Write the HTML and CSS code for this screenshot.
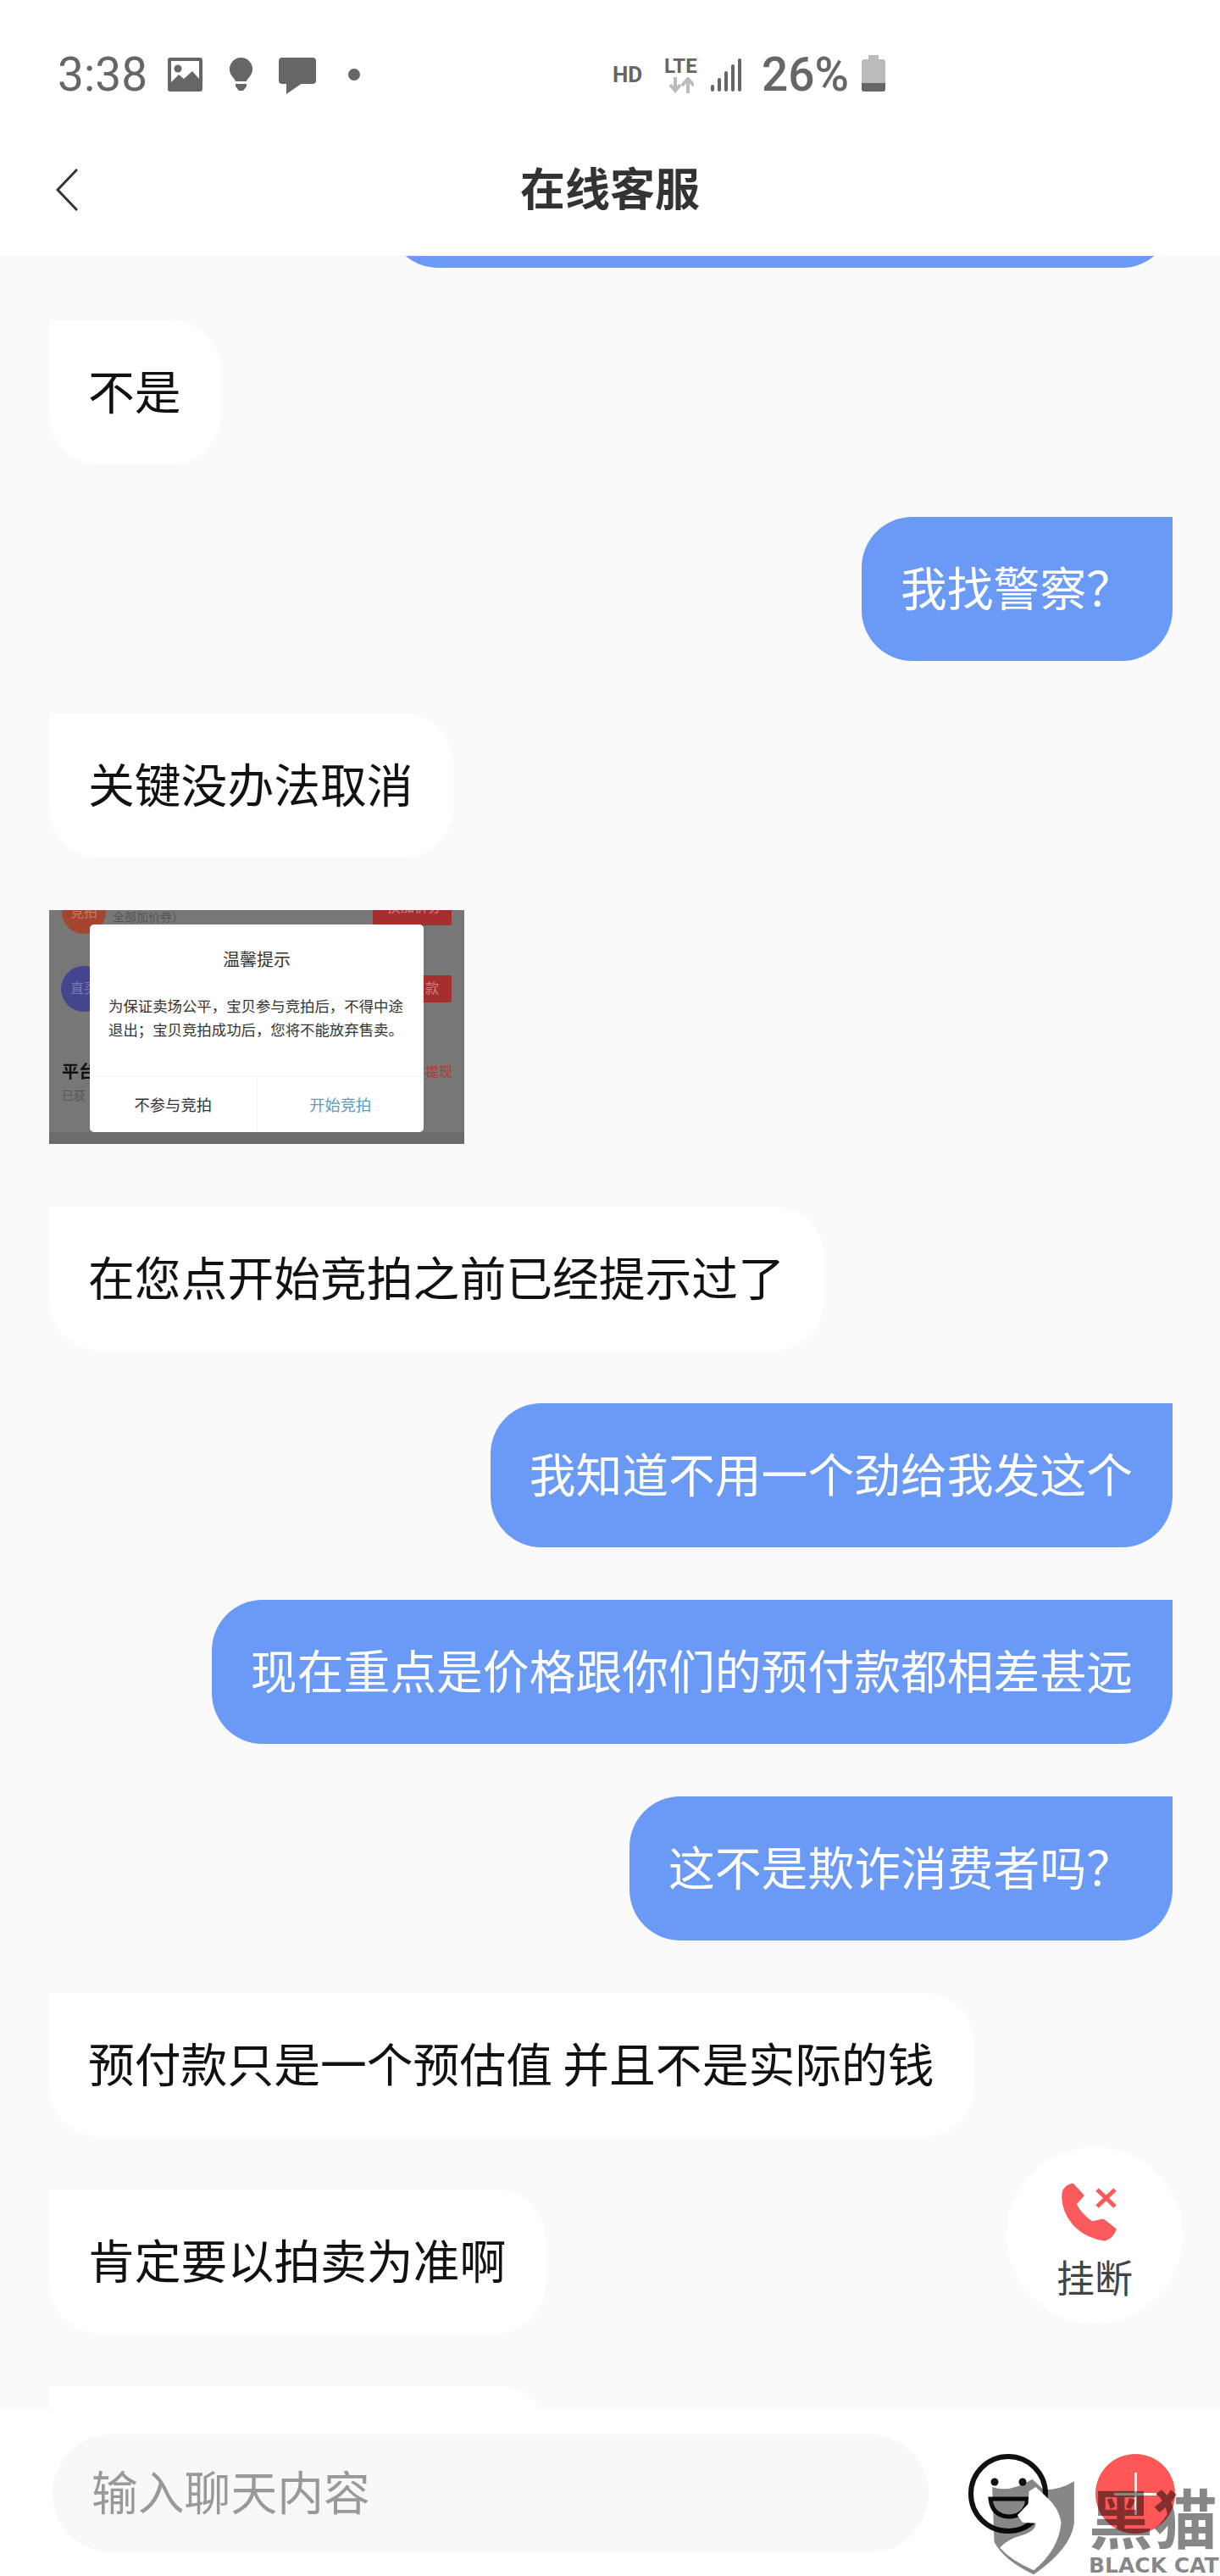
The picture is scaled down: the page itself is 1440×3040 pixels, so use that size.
FILE: index.html
```html
<!DOCTYPE html>
<html lang="zh-CN">
<head>
    <meta charset="UTF-8">
    <meta name="viewport" content="width=device-width, initial-scale=1.0">
    <title>在线客服</title>
    <link rel="stylesheet" href="styles.css">
</head>
<body>
    <div class="screen">
        <header class="top">
            <div class="status-bar">
                <div class="status-left">
                    <span class="clock">3:38</span>
                    <svg class="ic-image" viewBox="0 0 41 40">
                        <rect width="41" height="40" rx="3" fill="#666"/>
                        <rect x="4" y="4" width="33" height="32" fill="#fff"/>
                        <circle cx="12" cy="13" r="4.5" fill="#666"/>
                        <path d="M4 29 L13 20 L19 25 L29 16 L37 25 V36 H4 Z" fill="#666"/>
                    </svg>
                    <svg class="ic-bulb" viewBox="0 0 27 40">
                        <path d="M13.5 0 A13.5 13.5 0 0 1 27 14 C27 21 21 24 20 28 H7 C6 24 0 21 0 14 A13.5 13.5 0 0 1 13.5 0 Z" fill="#666"/>
                        <path d="M7 31 H20 V34 L16 39 H11 L7 34 Z" fill="#666"/>
                    </svg>
                    <svg class="ic-chat" viewBox="0 0 44 43">
                        <rect width="44" height="31" rx="4" fill="#666"/>
                        <path d="M9 30 H28 L9 43 Z" fill="#666"/>
                    </svg>
                    <span class="status-dot"></span>
                </div>
                <div class="status-right">
                    <span class="hd">HD</span>
                    <div class="lte">
                        <span class="lte-label">LTE</span>
                        <svg class="lte-arrows" viewBox="0 0 30 19">
                            <path d="M8 0 V13 M2 9 L8 16 L14 9" fill="none" stroke="#bbb" stroke-width="4"/>
                            <path d="M23 19 V5 M16 10 L23 2 L30 10" fill="none" stroke="#bbb" stroke-width="4"/>
                        </svg>
                    </div>
                    <div class="signal">
                        <span class="bar bar-1"></span>
                        <span class="bar bar-2"></span>
                        <span class="bar bar-3"></span>
                        <span class="bar bar-4"></span>
                        <span class="bar bar-5"></span>
                    </div>
                    <span class="percent">26%</span>
                    <div class="battery">
                        <span class="battery-nub"></span>
                        <div class="battery-body"><span class="battery-fill"></span></div>
                    </div>
                </div>
            </div>
            <nav class="nav">
                <svg class="back" viewBox="0 0 26 50">
                    <path d="M25 1 L2 25 L25 49" fill="none" stroke="#333" stroke-width="3"/>
                </svg>
                <h1 class="title">在线客服</h1>
            </nav>
        </header>

        <main class="chat">
            <div class="bubble mine cut"></div>
            <div class="bubble theirs">不是</div>
            <div class="bubble mine">我找警察&#65311;</div>
            <div class="bubble theirs">关键没办法取消</div>
            <div class="shot">
                <svg class="shot-back" viewBox="0 0 490 276">
                    <rect width="490" height="276" fill="#777"/>
                    <circle cx="41" cy="2" r="26" fill="#a5452f"/>
                    <text class="shot-on-circle" x="25" y="8">竞拍</text>
                    <text class="shot-soft" x="75" y="13">全部加价券&#65289;</text>
                    <rect x="382" y="-20" width="93" height="38" rx="3" fill="#a52f2f"/>
                    <text class="shot-on-btn" x="399" y="2">换加价券</text>
                    <circle cx="41" cy="93" r="27" fill="#45458f"/>
                    <text class="shot-on-blue" x="25" y="98">直买</text>
                    <rect x="382" y="77" width="93" height="32" rx="3" fill="#a52f2f"/>
                    <text class="shot-on-btn" x="444" y="98">款</text>
                    <text class="shot-strong" x="15" y="198">平台</text>
                    <text class="shot-soft" x="15" y="224">已获</text>
                    <text class="shot-link" x="444" y="197">提现</text>
                    <rect x="0" y="262" width="490" height="14" fill="#6c6c6c"/>
                </svg>
                <div class="dialog">
                    <div class="dialog-title">温馨提示</div>
                    <p class="dialog-text">为保证卖场公平&#65292;宝贝参与竞拍后&#65292;不得中途退出&#65307;宝贝竞拍成功后&#65292;您将不能放弃售卖。</p>
                    <div class="dialog-actions">
                        <span class="dialog-btn">不参与竞拍</span>
                        <span class="dialog-btn primary">开始竞拍</span>
                    </div>
                </div>
            </div>
            <div class="bubble theirs">在您点开始竞拍之前已经提示过了</div>
            <div class="bubble mine">我知道不用一个劲给我发这个</div>
            <div class="bubble mine">现在重点是价格跟你们的预付款都相差甚远</div>
            <div class="bubble mine">这不是欺诈消费者吗&#65311;</div>
            <div class="bubble theirs">预付款只是一个预估值 并且不是实际的钱</div>
            <div class="bubble theirs">肯定要以拍卖为准啊</div>
            <div class="bubble theirs last"></div>
        </main>

        <footer class="composer">
            <div class="input">输入聊天内容</div>
            <svg class="emoji" viewBox="0 0 94 94">
                <circle cx="47" cy="47" r="44" fill="none" stroke="#111" stroke-width="6"/>
                <circle cx="31" cy="33" r="4.5" fill="#111"/>
                <circle cx="64" cy="33" r="4.5" fill="#111"/>
                <path d="M26 53 H70 Q68 73 48 74 Q28 73 26 53 Z" fill="#fff" stroke="#111" stroke-width="5"/>
            </svg>
            <div class="plus"></div>
        </footer>

        <button class="hangup">
            <svg class="hangup-icon" viewBox="0 0 80 80">
                <path d="M16 3 L28 16 L19 26 Q26 40 39 48 L52 45 L66 56 Q63 65 54 68 Q31 65 17 49 Q3 32 5 13 Q7 5 16 3 Z" fill="#fb5a5c" stroke="#fb5a5c" stroke-width="3" stroke-linejoin="round"/>
                <path d="M45 9 L66 29 M66 9 L45 29" fill="none" stroke="#fb5a5c" stroke-width="5"/>
            </svg>
            <span>挂断</span>
        </button>

        <div class="watermark">
            <svg class="wm-shield" viewBox="108 120 290 342">
                <path d="M108 150 Q170 172 250 122 L290 160 Q350 160 398 130 L398 280 Q385 370 255 460 Q150 410 115 345 Z" fill="rgba(0,0,0,0.47)"/>
                <path d="M238 165 L262 150 L300 185 Q345 225 352 275 Q345 370 255 445 Q175 410 135 365 Q160 335 215 320 Q262 305 262 278 L215 275 L197 250 L235 210 Z" fill="#fff"/>
            </svg>
            <div class="wm-text">
                <div class="wm-cn">黑猫</div>
                <div class="wm-en">BLACK CAT</div>
            </div>
        </div>
    </div>
</body>
</html>
```

FILE: styles.css
```css
body {
    margin: 0;
    font-family: 'Noto Sans CJK SC', 'Noto Sans', sans-serif;
    background: #fff;
}

.screen {
    position: relative;
    width: 1440px;
    height: 3040px;
    display: flex;
    flex-direction: column;
    overflow: hidden;
    background: #fafafa;
}

/* top */
.top {
    height: 302px;
    flex-shrink: 0;
    background: #fff;
    position: relative;
    z-index: 1;
}

.status-bar {
    height: 176px;
    display: flex;
    align-items: center;
    padding: 0 395px 0 68px;
    color: #666;
    font-family: 'Roboto', sans-serif;
}

.status-left {
    display: flex;
    align-items: center;
}

.clock {
    font-size: 55px;
    line-height: 60px;
    width: 130px;
}

.ic-image {
    width: 41px;
    height: 40px;
    margin-right: 32px;
}

.ic-bulb {
    width: 27px;
    height: 40px;
    margin-right: 31px;
}

.ic-chat {
    width: 44px;
    height: 43px;
    margin-right: 38px;
    margin-top: 3px;
}

.status-dot {
    width: 14px;
    height: 14px;
    border-radius: 50%;
    background: #666;
}

.status-right {
    margin-left: auto;
    display: flex;
    align-items: center;
}

.hd {
    font-size: 26px;
    font-weight: 700;
    width: 61px;
}

.lte {
    width: 55px;
    display: flex;
    flex-direction: column;
    height: 44px;
}

.lte-label {
    font-size: 24px;
    font-weight: 700;
    line-height: 24px;
}

.lte-arrows {
    width: 30px;
    height: 19px;
    margin: 1px 0 0 5px;
}

.signal {
    display: flex;
    align-items: flex-end;
    gap: 4px;
    height: 39px;
    margin-right: 24px;
    margin-top: 1px;
}

.bar {
    width: 4px;
    background: #666;
    border-radius: 2px;
}

.bar-1 { height: 8px; }
.bar-2 { height: 16px; }
.bar-3 { height: 24px; }
.bar-4 { height: 32px; }
.bar-5 { height: 39px; }

.percent {
    font-size: 55px;
    font-weight: 500;
    line-height: 60px;
    width: 118px;
}

.battery {
    width: 28px;
    height: 43px;
    display: flex;
    flex-direction: column;
    align-items: center;
    margin-top: -3px;
}

.battery-nub {
    width: 12px;
    height: 5px;
    background: #bbb;
}

.battery-body {
    width: 28px;
    height: 38px;
    border-radius: 3px;
    background: #bbb;
    display: flex;
    align-items: flex-end;
    overflow: hidden;
}

.battery-fill {
    width: 100%;
    height: 10px;
    background: #666;
}

.nav {
    display: grid;
    grid-template-columns: 1fr auto 1fr;
    align-items: center;
    height: 96px;
    padding: 0 66px;
}

.back {
    width: 26px;
    height: 50px;
}

.title {
    margin: 0 0 8px;
    font-size: 53px;
    font-weight: 700;
    line-height: 60px;
    color: #333;
}

/* chat list */
.chat {
    flex: 1;
    min-height: 0;
    overflow: hidden;
    display: flex;
    flex-direction: column;
    align-items: flex-start;
    gap: 62px;
    padding: 0 56px 0 58px;
}

.bubble {
    box-sizing: border-box;
    height: 170px;
    padding: 43px 47px 0 46px;
    font-size: 54.8px;
    line-height: 76px;
    white-space: nowrap;
    flex-shrink: 0;
}

.bubble.theirs {
    background: #fff;
    color: #111;
    border-radius: 0 60px 60px 60px;
}

.bubble.mine {
    align-self: flex-end;
    background: #6a9af5;
    color: #fff;
    border-radius: 60px 0 60px 60px;
}

.bubble.cut {
    width: 927px;
    height: 171px;
    margin-top: -157px;
}

.bubble.last {
    width: 590px;
}

/* screenshot sent in the chat */
.shot {
    position: relative;
    width: 490px;
    height: 276px;
    margin-bottom: 12px;
    flex-shrink: 0;
    overflow: hidden;
}

.shot-back {
    display: block;
    width: 490px;
    height: 276px;
}

.shot-strong {
    font-size: 20px;
    font-weight: 700;
    fill: #111;
}

.shot-soft {
    font-size: 14px;
    fill: #555;
}

.shot-link {
    font-size: 16px;
    fill: #b33;
}

.shot-on-circle {
    font-size: 16px;
    fill: #c77a60;
}

.shot-on-btn {
    font-size: 16px;
    fill: #cf8080;
}

.shot-on-blue {
    font-size: 16px;
    fill: #7a7ab5;
}

.dialog {
    position: absolute;
    left: 48px;
    top: 17px;
    width: 394px;
    height: 245px;
    background: #fff;
    border-radius: 5px;
    display: flex;
    flex-direction: column;
    color: #333;
}

.dialog-title {
    font-size: 20px;
    line-height: 28px;
    text-align: center;
    padding-top: 27px;
}

.dialog-text {
    margin: 0;
    flex: 1;
    padding: 27px 20px 0 22px;
    font-size: 17.4px;
    line-height: 28px;
}

.dialog-actions {
    display: flex;
    height: 65px;
    border-top: 1px solid #f4f4f4;
}

.dialog-btn {
    flex: 1;
    font-size: 18.3px;
    line-height: 65px;
    text-align: center;
}

.dialog-btn.primary {
    color: #5b9dbb;
    border-left: 1px solid #f4f4f4;
}

/* bottom */
.composer {
    height: 197px;
    flex-shrink: 0;
    box-sizing: border-box;
    background: #fff;
    display: flex;
    align-items: center;
    padding: 2px 0 0 62px;
    position: relative;
}

.input {
    box-sizing: border-box;
    width: 1034px;
    height: 139px;
    border-radius: 70px;
    background: #f8f8f8;
    color: #999;
    font-size: 54.8px;
    line-height: 131px;
    padding-left: 46px;
}

.emoji {
    width: 94px;
    height: 94px;
    margin: 0 56px 0 47px;
}

.plus {
    position: relative;
    width: 94px;
    height: 94px;
    border-radius: 50%;
    background: #fd5757;
}

.plus::before,
.plus::after {
    content: "";
    position: absolute;
    background: #fff;
}

.plus::before {
    left: 46px;
    top: 22px;
    width: 3px;
    height: 50px;
}

.plus::after {
    left: 22px;
    top: 46px;
    width: 50px;
    height: 3px;
}

.hangup {
    position: absolute;
    left: 1188px;
    top: 2534px;
    width: 208px;
    height: 208px;
    padding: 0;
    border: none;
    border-radius: 50%;
    background: #fff;
    display: flex;
    flex-direction: column;
    align-items: center;
    font-family: inherit;
    font-size: 45px;
    line-height: 54px;
    color: #444;
}

.hangup-icon {
    width: 80px;
    height: 80px;
    margin-top: 41px;
    margin-right: 4px;
}

.hangup span {
    margin-top: 5px;
}

/* site watermark laid over the corner */
.watermark {
    position: absolute;
    left: 1171px;
    top: 2925px;
    display: flex;
    gap: 17px;
}

.wm-shield {
    width: 97px;
    height: 114px;
}

.wm-text {
    color: rgba(0, 0, 0, 0.47);
    width: 155px;
}

.wm-cn {
    margin-top: 8px;
    font-size: 76px;
    font-weight: 700;
    line-height: 72px;
    height: 72px;
    white-space: nowrap;
}

.wm-en {
    margin-top: 11px;
    font-family: 'DejaVu Sans', sans-serif;
    font-size: 25px;
    font-weight: 700;
    line-height: 24px;
    white-space: nowrap;
}
```
